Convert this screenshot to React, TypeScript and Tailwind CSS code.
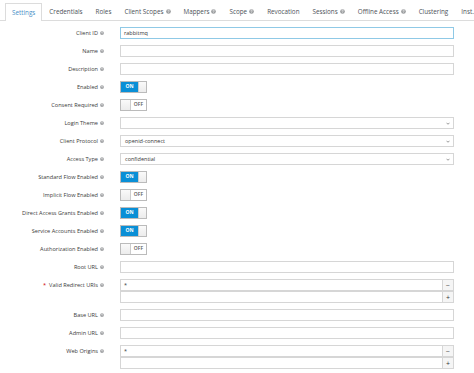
import React from "react";

const Help = ({ s = 5 }: { s?: number }) => (
  <svg width={s} height={s} viewBox="0 0 16 16" className="inline-block shrink-0" style={{ verticalAlign: "middle" }}>
    <circle cx="8" cy="8" r="7.5" fill="#9a9c9e" />
    <path d="M5.6 6.1c0-1.4 1.1-2.3 2.5-2.3s2.4.9 2.4 2.1c0 1.7-2.2 1.8-2.2 3.4" stroke="#fff" strokeWidth="1.8" fill="none" strokeLinecap="round" />
    <circle cx="8.3" cy="12" r="1.1" fill="#fff" />
  </svg>
);

const tabs: { t: string; h?: boolean }[] = [
  { t: "Settings" },
  { t: "Credentials" },
  { t: "Roles" },
  { t: "Client Scopes", h: true },
  { t: "Mappers", h: true },
  { t: "Scope", h: true },
  { t: "Revocation" },
  { t: "Sessions", h: true },
  { t: "Offline Access", h: true },
  { t: "Clustering" },
  { t: "Inst..." },
];

const Label = ({ text, req }: { text: string; req?: boolean }) => (
  <div className="w-[104px] shrink-0 flex items-center justify-end gap-[2px] h-[12px] text-[5.6px] font-medium text-[#3a3a3a] whitespace-nowrap">
    {req && <span className="text-[#c00] mr-[1px]">*</span>}
    <span>{text}</span>
    <Help s={4} />
  </div>
);

const Input = ({ value = "", focus = false, w = "w-[334px]" }: { value?: string; focus?: boolean; w?: string }) => (
  <div
    className={`${w} h-[12px] border ${focus ? "border-[#8fc9e6]" : "border-[#d6d6d6]"} bg-white flex items-center px-[3px] text-[5.5px] text-[#363636]`}
  >
    {value}
  </div>
);

const Select = ({ value = "" }: { value?: string }) => (
  <div className="w-[334px] h-[12px] border border-[#d6d6d6] bg-white flex items-center justify-between pl-[4px] pr-[3px] text-[5.5px] text-[#363636]">
    <span>{value}</span>
    <svg width="4" height="3" viewBox="0 0 10 8">
      <path d="M1 2l4 4 4-4" stroke="#777" strokeWidth="2" fill="none" />
    </svg>
  </div>
);

const Switch = ({ on }: { on: boolean }) =>
  on ? (
    <div className="w-[27px] h-[12px] border border-[#bbb] flex">
      <div className="w-[17px] h-full bg-[#0a8fd6] text-white text-[5px] font-bold flex items-center justify-center">ON</div>
      <div className="flex-1 h-full bg-gradient-to-b from-[#fafafa] to-[#ececec] border-l border-[#ccc]" />
    </div>
  ) : (
    <div className="w-[27px] h-[12px] border border-[#bbb] flex">
      <div className="w-[10px] h-full bg-gradient-to-b from-[#fafafa] to-[#ececec] border-r border-[#ccc]" />
      <div className="flex-1 h-full bg-white text-[#555] text-[5px] font-semibold flex items-center justify-center">OFF</div>
    </div>
  );

const MultiInput = ({ value }: { value: string }) => (
  <div className="flex flex-col">
    <div className="flex">
      <Input value={value} w="w-[323px]" />
      <div className="w-[11px] h-[12px] border border-l-0 border-[#d6d6d6] bg-[#f5f5f5] flex items-center justify-center text-[7px] leading-none text-[#333]">−</div>
    </div>
    <div className="flex">
      <Input w="w-[323px]" />
      <div className="w-[11px] h-[12px] border border-l-0 border-[#d6d6d6] bg-[#f5f5f5] flex items-center justify-center text-[7px] leading-none text-[#333]">+</div>
    </div>
  </div>
);

const Row = ({ label, req, children }: { label: string; req?: boolean; children: React.ReactNode }) => (
  <div className="flex items-start gap-[16px] mb-[6px]">
    <Label text={label} req={req} />
    {children}
  </div>
);

export default function App() {
  return (
    <div className="w-[474px] h-[373px] bg-white overflow-hidden" style={{ fontFamily: '"Open Sans", "Noto Sans", sans-serif' }}>
      <div className="flex items-end h-[21px] border-b border-[#dcdcdc] pl-[5px]">
        {tabs.map((t, i) => (
          <div
            key={t.t}
            className={`h-[17px] px-[6px] flex items-center gap-[2px] text-[6.3px] whitespace-nowrap ${
              i === 0 ? "border border-b-0 border-[#dcdcdc] bg-white text-[#4a8fc7] -mb-px h-[18px]" : "text-[#4d5258]"
            } ${i > 0 ? "ml-[1px]" : ""}`}
          >
            <span>{t.t}</span>
            {t.h && <Help s={5} />}
          </div>
        ))}
      </div>
      <div className="pt-[6px]">
        <Row label="Client ID"><Input value="rabbitmq" focus /></Row>
        <Row label="Name"><Input /></Row>
        <Row label="Description"><Input /></Row>
        <Row label="Enabled"><Switch on /></Row>
        <Row label="Consent Required"><Switch on={false} /></Row>
        <Row label="Login Theme"><Select /></Row>
        <Row label="Client Protocol"><Select value="openid-connect" /></Row>
        <Row label="Access Type"><Select value="confidential" /></Row>
        <Row label="Standard Flow Enabled"><Switch on /></Row>
        <Row label="Implicit Flow Enabled"><Switch on={false} /></Row>
        <Row label="Direct Access Grants Enabled"><Switch on /></Row>
        <Row label="Service Accounts Enabled"><Switch on /></Row>
        <Row label="Authorization Enabled"><Switch on={false} /></Row>
        <Row label="Root URL"><Input /></Row>
        <Row label="Valid Redirect URIs" req><MultiInput value="*" /></Row>
        <Row label="Base URL"><Input /></Row>
        <Row label="Admin URL"><Input /></Row>
        <Row label="Web Origins"><MultiInput value="*" /></Row>
      </div>
    </div>
  );
}
